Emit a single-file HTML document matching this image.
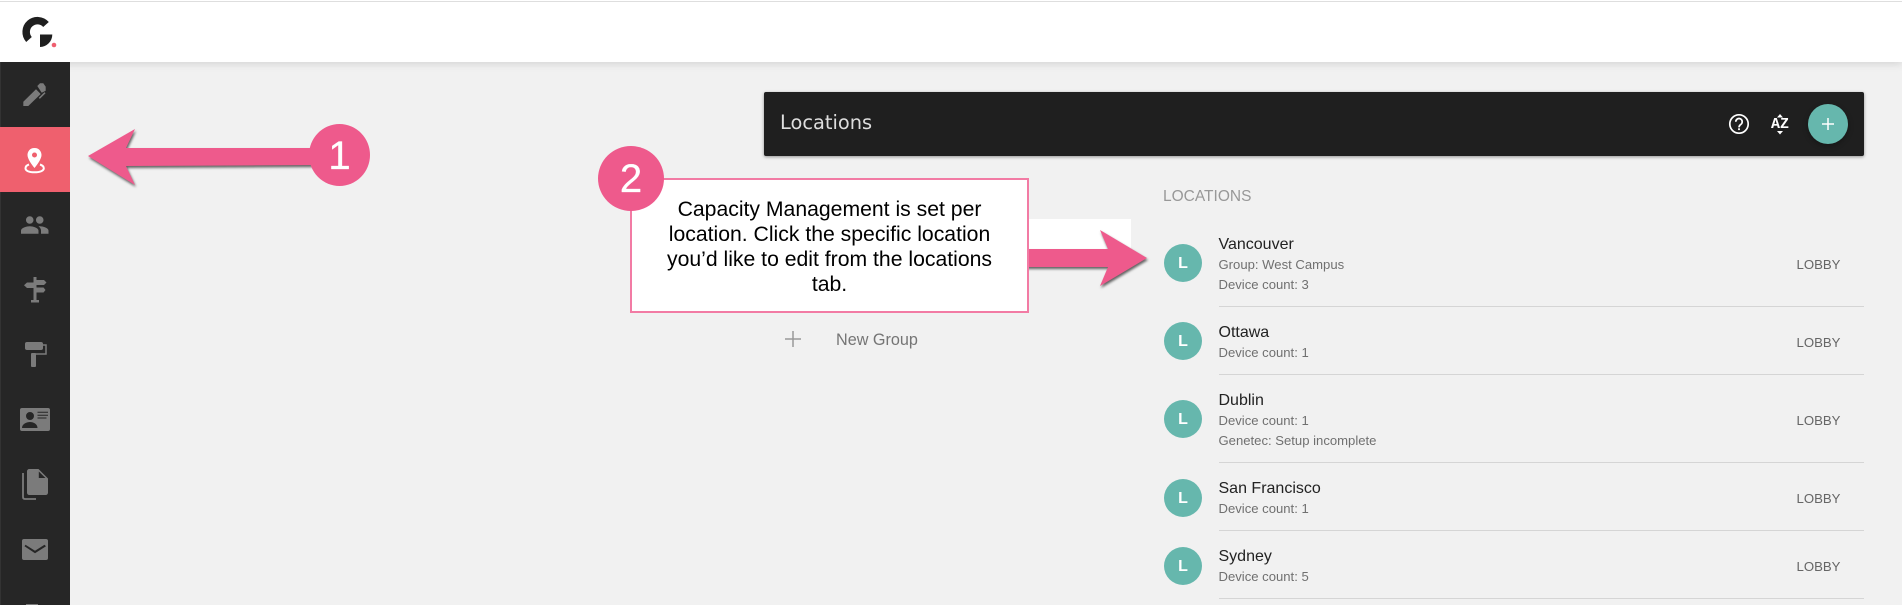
<!DOCTYPE html>
<html><head><meta charset="utf-8">
<style>
*{box-sizing:border-box}
html,body{margin:0;padding:0;width:1902px;height:605px;overflow:hidden;background:#f1f1f1;font-family:"Liberation Sans",sans-serif}
.a{position:absolute;white-space:nowrap}
#top{position:absolute;left:0;top:0;width:1902px;height:62px;background:#fff;box-shadow:0 2px 8px rgba(0,0,0,.12)}
#topline{position:absolute;left:0;top:1px;width:1902px;height:1px;background:#dedede}
#side{position:absolute;left:0;top:62px;width:70px;height:543px;background:#262626;border-left:1px solid #333}
#act{position:absolute;left:0;top:127px;width:70px;height:65px;background:#ef606e}
#bar{position:absolute;left:764px;top:92px;width:1100px;height:64px;background:#1f1f1f;border-radius:2px;box-shadow:0 1px 3px rgba(0,0,0,.4)}
.nm{font-size:16px;color:#222;left:1218.500px}
.sb{font-size:13.100px;color:#707070;left:1218.500px}
.lb{font-size:13.200px;color:#666;left:1796.500px}
.av{position:absolute;left:1164px;width:38px;height:38px;border-radius:50%;background:#66b7ad;color:#fff;font-weight:bold;font-size:16px;line-height:40px;text-align:center}
.dv{position:absolute;left:1219px;width:645px;height:1px;background:#d5d5d5}
#box{position:absolute;left:630px;top:178px;width:399px;height:135px;background:#fff;border:2px solid #f27ba4;color:#000;font-size:21.200px;line-height:25px;text-align:center;padding:17px 0 0}
.num{position:absolute;border-radius:50%;background:#ee5a8c;color:#fff;text-align:center;font-size:40px;-webkit-text-stroke:.3px #fff}
.shadow{filter:drop-shadow(1px 2px 1.200px rgba(0,0,0,.6))}
</style></head><body>
<div id="top"></div>
<div id="topline"></div>
<div id="side"></div>
<div id="act"></div>
<svg class="a" style="left:0;top:0" width="70" height="62" viewBox="0 0 70 62">
<path d="M46 24.500 A10.500 10.500 0 1 0 29 39.500" fill="none" stroke="#1f1f1f" stroke-width="7.500"/>
<path d="M40 34.500H52.300A12.500 12.500 0 0 1 40 47Z" fill="#1f1f1f"/>
<circle cx="54" cy="45" r="2.300" fill="#ef5f70"/>
</svg>

<svg class="a" style="left:0;top:62px" width="70" height="543" viewBox="0 62 70 543" fill="#7b7b7b">
<!-- pencil -->
<path d="M23.300 101.700L36 89.300L40.700 94L28.300 106H23.300Z"/>
<path d="M37.300 86L40 83.300H43.300L45.700 86.700V90.700L41.700 92.700Z"/>
<path d="M39.300 98.300L45 92.700" stroke="#7b7b7b" stroke-width="1.500" fill="none"/>
<!-- pin -->
<path fill="#fff" fill-rule="evenodd" d="M34.500 148C29.500 148 27.500 152 27.500 155C27.500 159 32 165 34.500 168C37 165 41.500 159 41.500 155C41.500 152 39.500 148 34.500 148ZM34.500 152.500a2.500 2.500 0 1 1 0 5a2.500 2.500 0 0 1 0-5Z"/>
<path fill="none" stroke="#fff" stroke-width="2" d="M29 164.500C26 165.500 25.500 167 25.500 168.300C25.500 170.800 29 172.300 34.500 172.300C40 172.300 43.800 170.800 43.800 168.300C43.800 167 43 165.500 40 164.500"/>
<!-- people -->
<path transform="translate(19.750 210) scale(1.250)" d="M16 11c1.660 0 2.990-1.340 2.990-3S17.660 5 16 5c-1.660 0-3 1.340-3 3s1.340 3 3 3zm-8 0c1.660 0 2.990-1.340 2.990-3S9.660 5 8 5C6.340 5 5 6.340 5 8s1.340 3 3 3zm0 2c-2.330 0-7 1.170-7 3.500V19h14v-2.500c0-2.330-4.670-3.500-7-3.500zm8 0c-.29 0-.62.02-.97.05 1.160.84 1.970 1.970 1.970 3.450V19h6v-2.500c0-2.330-4.670-3.500-7-3.500z"/>
<!-- signpost -->
<path d="M33.500 277H36.500V280H44L46.500 282.500L44 285H36.500V287.500H43.500L45.500 290L43.500 292.500H36.500V300H39V302.500H31V300H33.500V288H27L24 285.200L27 282.500H33.500Z"/>
<!-- roller -->
<rect x="25" y="342" width="18" height="8" rx="2"/>
<path d="M43 345H46V354H34" fill="none" stroke="#7b7b7b" stroke-width="1.500"/>
<rect x="31" y="353" width="5" height="14" rx="1"/>
<!-- card -->
<path fill-rule="evenodd" d="M22 408H48A2 2 0 0 1 50 410V429A2 2 0 0 1 48 431H22A2 2 0 0 1 20 429V410A2 2 0 0 1 22 408ZM30 412a4 4 0 1 0 0 8a4 4 0 0 0 0-8ZM22 428C22 424 26.500 422 30 422S37.500 424 37.500 428ZM37.500 411.800V412.800H48V411.800ZM37.500 414.800V415.800H48V414.800ZM37.500 417.500V418.500H46.500V417.500Z"/>
<!-- files -->
<path d="M27 471.500C27 470 28 469 29.500 469H38.500L48 478.500V492.500C48 494 47 495 45.500 495H29.500C28 495 27 494 27 492.500ZM38.800 471.500V478H45.500Z" fill-rule="evenodd"/>
<path d="M23 473V497C23 498.500 23.700 499 25 499H36" fill="none" stroke="#7b7b7b" stroke-width="1.800"/>
<!-- mail -->
<path fill-rule="evenodd" d="M24 539H46A2 2 0 0 1 48 541V558A2 2 0 0 1 46 560H24A2 2 0 0 1 22 558V541A2 2 0 0 1 24 539ZM25.500 544.800L35 550.700L44.500 544.800L46 546.300L35 553.300L24.500 546.300Z"/>
<rect x="26" y="604" width="12" height="1"/>
</svg>

<div id="bar"></div>
<div class="a" style="left:780px;top:111px;font-family:'DejaVu Sans',sans-serif;font-size:19.400px;line-height:24px;color:#dedede">Locations</div>
<svg class="a" style="left:1727px;top:112px" width="24" height="24" viewBox="0 0 24 24"><circle cx="12" cy="12" r="9.200" fill="none" stroke="#fff" stroke-width="1.700"/><path d="M8.800 9.800a3.200 3.200 0 1 1 5 2.600c-1.200 .8-1.800 1.400-1.800 3" fill="none" stroke="#fff" stroke-width="1.700"/><rect x="11.100" y="16.300" width="1.800" height="1.800" fill="#fff"/></svg>
<div class="a" style="left:1769px;top:117px;width:22px;text-align:center;font:bold 15px/16px 'Liberation Mono',monospace;color:#fff">AZ</div>
<svg class="a" style="left:1776px;top:113px" width="8" height="22" viewBox="0 0 8 22" fill="#fff"><path d="M4 1L7 4.500H1ZM1 18H7L4 21.500Z"/></svg>
<div class="a" style="left:1808px;top:104px;width:40px;height:40px;border-radius:50%;background:#66b7ad;box-shadow:0 2px 6px rgba(0,0,0,.3)"></div>
<svg class="a" style="left:1822px;top:118px" width="12" height="12" viewBox="0 0 12 12"><path d="M6 0V12M0 6H12" stroke="#fff" stroke-width="1.500"/></svg>

<div class="a" style="left:1163px;top:188px;font-size:15.500px;line-height:17px;color:#989898">LOCATIONS</div>

<div class="a" style="left:1000px;top:219px;width:131px;height:30px;background:#fff"></div>
<svg class="a shadow" style="left:1020px;top:225px;overflow:visible" width="135" height="65" viewBox="0 0 135 65">
<path d="M0 24H88L80 5L127 33L80 61L88 42H0Z" fill="#ee5a8c"/></svg>

<div id="box">Capacity Management is set per<br>location. Click the specific location<br>you’d like to edit from the locations<br>tab.</div>
<div class="num" style="left:598px;top:146px;width:66px;height:65px;line-height:66px">2</div>

<svg class="a shadow" style="left:85px;top:125px;overflow:visible" width="240" height="65" viewBox="0 0 240 65">
<path d="M3 31L50 4L41 23L235 23V40L41 41L50 60Z" fill="#ee5a8c"/></svg>
<div class="num" style="left:309px;top:124px;width:61px;height:62px;line-height:64px">1</div>

<svg class="a" style="left:785px;top:331px" width="16" height="16" viewBox="0 0 16 16"><path d="M8 0V16M0 8H16" stroke="#999" stroke-width="1.500"/></svg>
<div class="a" style="left:836px;top:331px;font-size:16.200px;line-height:18px;color:#757575">New Group</div>

<div class="av" style="top:244px">L</div>
<div class="a nm" style="top:235.500px;line-height:18px">Vancouver</div>
<div class="a sb" style="top:257px;line-height:15px">Group: West Campus</div>
<div class="a sb" style="top:277px;line-height:15px">Device count: 3</div>
<div class="a lb" style="top:257px;line-height:15px">LOBBY</div>
<div class="dv" style="top:306px"></div>

<div class="av" style="top:322px">L</div>
<div class="a nm" style="top:324px;line-height:18px">Ottawa</div>
<div class="a sb" style="top:345px;line-height:15px">Device count: 1</div>
<div class="a lb" style="top:335px;line-height:15px">LOBBY</div>
<div class="dv" style="top:374px"></div>

<div class="av" style="top:400px">L</div>
<div class="a nm" style="top:392px;line-height:18px">Dublin</div>
<div class="a sb" style="top:413px;line-height:15px">Device count: 1</div>
<div class="a sb" style="top:433px;line-height:15px">Genetec: Setup incomplete</div>
<div class="a lb" style="top:413px;line-height:15px">LOBBY</div>
<div class="dv" style="top:462px"></div>

<div class="av" style="top:479px">L</div>
<div class="a nm" style="top:480px;line-height:18px">San Francisco</div>
<div class="a sb" style="top:501px;line-height:15px">Device count: 1</div>
<div class="a lb" style="top:491px;line-height:15px">LOBBY</div>
<div class="dv" style="top:530px"></div>

<div class="av" style="top:547px">L</div>
<div class="a nm" style="top:548px;line-height:18px">Sydney</div>
<div class="a sb" style="top:569px;line-height:15px">Device count: 5</div>
<div class="a lb" style="top:559px;line-height:15px">LOBBY</div>
<div class="dv" style="top:598px"></div>
</body></html>
